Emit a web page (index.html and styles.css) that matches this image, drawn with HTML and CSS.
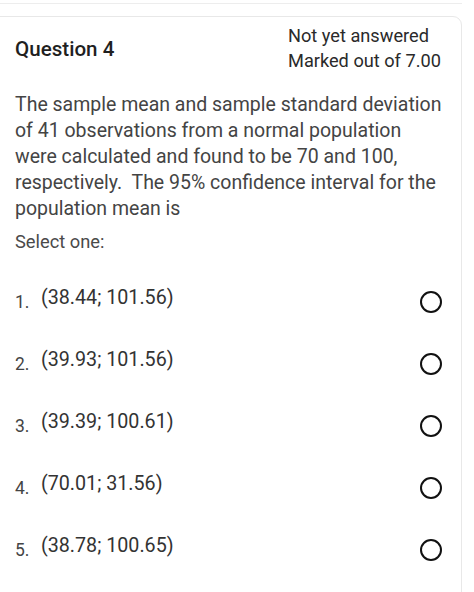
FILE: index.html
```html
<!DOCTYPE html>
<html>
<head>
<meta charset="utf-8">
<link rel="stylesheet" href="styles.css">
</head>
<body>
<div class="topbar"></div>
<div class="card">
  <div class="head">
    <div class="qno">Question 4</div>
    <div class="info">
      <div>Not yet answered</div>
      <div>Marked out of 7.00</div>
    </div>
  </div>
  <div class="qtext">The sample mean and sample standard deviation of 41 observations from a normal population were calculated and found to be 70 and 100, respectively.&nbsp; The 95% confidence interval for the population mean is</div>
  <div class="prompt">Select one:</div>
  <div class="answers">
    <div class="opt"><span class="num">1.</span><span class="val">(38.44; 101.56)</span><span class="radio"></span></div>
    <div class="opt"><span class="num">2.</span><span class="val">(39.93; 101.56)</span><span class="radio"></span></div>
    <div class="opt"><span class="num">3.</span><span class="val">(39.39; 100.61)</span><span class="radio"></span></div>
    <div class="opt"><span class="num">4.</span><span class="val">(70.01; 31.56)</span><span class="radio"></span></div>
    <div class="opt"><span class="num">5.</span><span class="val">(38.78; 100.65)</span><span class="radio"></span></div>
  </div>
</div>
</body>
</html>
```
FILE: styles.css
```css
html, body {
  margin: 0;
  padding: 0;
  background: #ffffff;
  font-family: Roboto, "Liberation Sans", sans-serif;
  color: #333;
  overflow: hidden;
}
.topbar {
  height: 3px;
  width: 462px;
  border-bottom: 1px solid #ededed;
}
.card {
  margin-top: 12px;
  margin-left: -10px;
  width: 472px;
  border: 1px solid #e8e8e8;
  border-radius: 9px;
  padding: 0 0 0 24px;
  box-sizing: border-box;
  height: 620px;
}
.head {
  display: flex;
  justify-content: space-between;
  align-items: center;
  padding: 6px 20px 0 0;
}
.qno {
  font-size: 20.6px;
  font-weight: 500;
  color: #1f1f1f;
  margin-top: 2px;
}
.info {
  font-size: 18.2px;
  line-height: 25px;
  color: #2a2a2a;
  width: 153px;
  white-space: nowrap;
}
.qtext {
  margin-top: 19px;
  font-size: 19.5px;
  line-height: 26px;
  color: #444;
  padding-right: 14px;
}
.prompt {
  margin-top: 7px;
  font-size: 18.3px;
  line-height: 25px;
  color: #4a4a4a;
}
.answers {
  margin-top: 31px;
  display: flex;
  flex-direction: column;
  gap: 38px;
  padding-right: 19px;
}
.opt {
  display: flex;
  align-items: center;
  height: 24px;
}
.num {
  font-size: 17.5px;
  color: #444;
  width: 26px;
  margin-top: 10px;
}
.val {
  font-size: 19.7px;
  color: #333;
  flex: 1;
}
.radio {
  width: 18px;
  height: 18px;
  border: 2px solid #111;
  border-radius: 50%;
  margin-top: 10px;
}
```
